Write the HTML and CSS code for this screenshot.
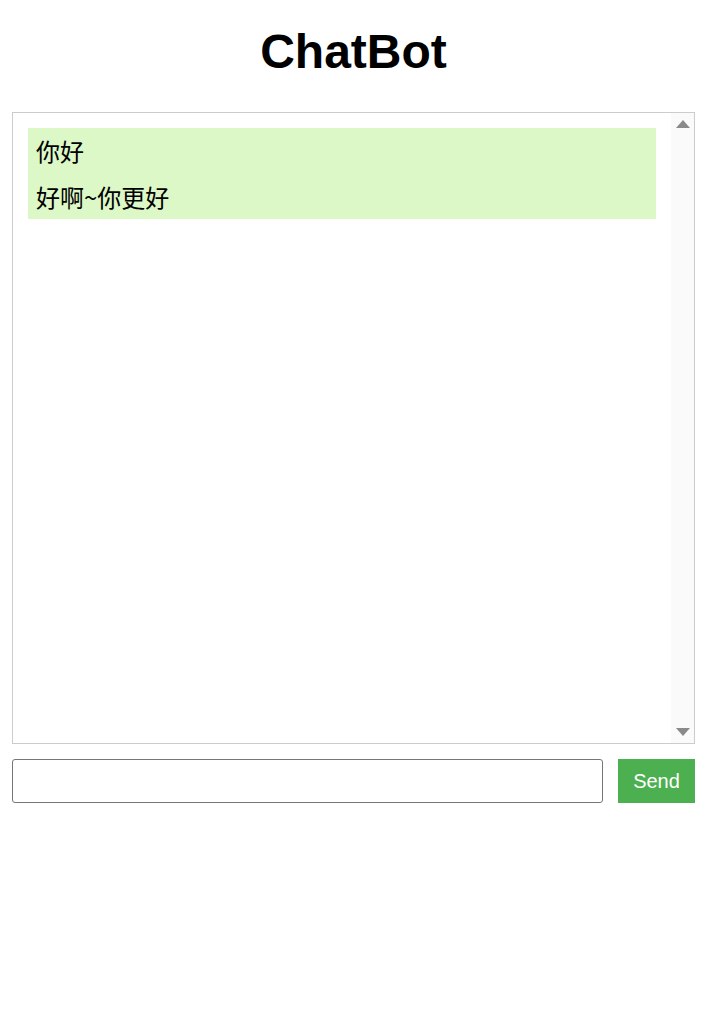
FILE: index.html
```html
<!DOCTYPE html>
<html lang="zh">
<head>
<meta charset="utf-8">
<title>ChatBot</title>
<link rel="stylesheet" href="styles.css">
</head>
<body>
<div class="page">
  <h1 class="title">ChatBot</h1>
  <div class="chat-box">
    <div class="chat-scroll">
      <div class="messages">
        <div class="msg">你好</div>
        <div class="msg">好啊~你更好</div>
      </div>
    </div>
    <div class="scrollbar" aria-hidden="true">
      <span class="arrow arrow-up"></span>
      <span class="arrow arrow-down"></span>
    </div>
  </div>
  <div class="composer">
    <input class="composer-input" type="text">
    <button class="send-btn">Send</button>
  </div>
</div>
</body>
</html>
```
FILE: styles.css
```css
html, body {
  margin: 0;
  padding: 0;
  background: #ffffff;
}
body {
  font-family: "Liberation Sans", Arial, sans-serif;
  color: #000;
}
.page {
  padding: 0 11px 0 12px;
}
.title {
  margin: 0;
  padding-top: 25px;
  height: 112px;
  box-sizing: border-box;
  text-align: center;
  font-size: 48px;
  font-weight: bold;
  line-height: 53.6px;
}
.chat-box {
  display: flex;
  height: 632px;
  box-sizing: border-box;
  border: 1px solid #cccccc;
}
.chat-scroll {
  flex: 1;
  min-width: 0;
  padding: 15px;
  overflow: hidden;
}
.messages {
  background: #dcf8c6;
  font-family: "Noto Sans CJK SC", "Noto Sans", sans-serif;
  font-size: 24px;
  line-height: 45.5px;
  padding: 0 8px;
}
.scrollbar {
  width: 23px;
  flex: none;
  background: #fafafa;
  display: flex;
  flex-direction: column;
  justify-content: space-between;
  align-items: center;
  padding: 7px 0;
  box-sizing: border-box;
}
.arrow {
  width: 0;
  height: 0;
  border-left: 7px solid transparent;
  border-right: 7px solid transparent;
}
.arrow-up {
  border-bottom: 8px solid #8a8a8a;
}
.arrow-down {
  border-top: 8px solid #8a8a8a;
}
.composer {
  display: flex;
  gap: 15px;
  margin-top: 15px;
}
.composer-input {
  flex: 1;
  height: 44px;
  box-sizing: border-box;
  border: 1px solid #767676;
  border-radius: 3px;
  margin: 0;
  padding: 0 8px;
  font-size: 20px;
}
.send-btn {
  width: 77px;
  height: 44px;
  margin: 0;
  border: none;
  background: #4caf50;
  color: #ffffff;
  font-family: "Liberation Sans", Arial, sans-serif;
  font-size: 20px;
  padding: 0;
}
```
